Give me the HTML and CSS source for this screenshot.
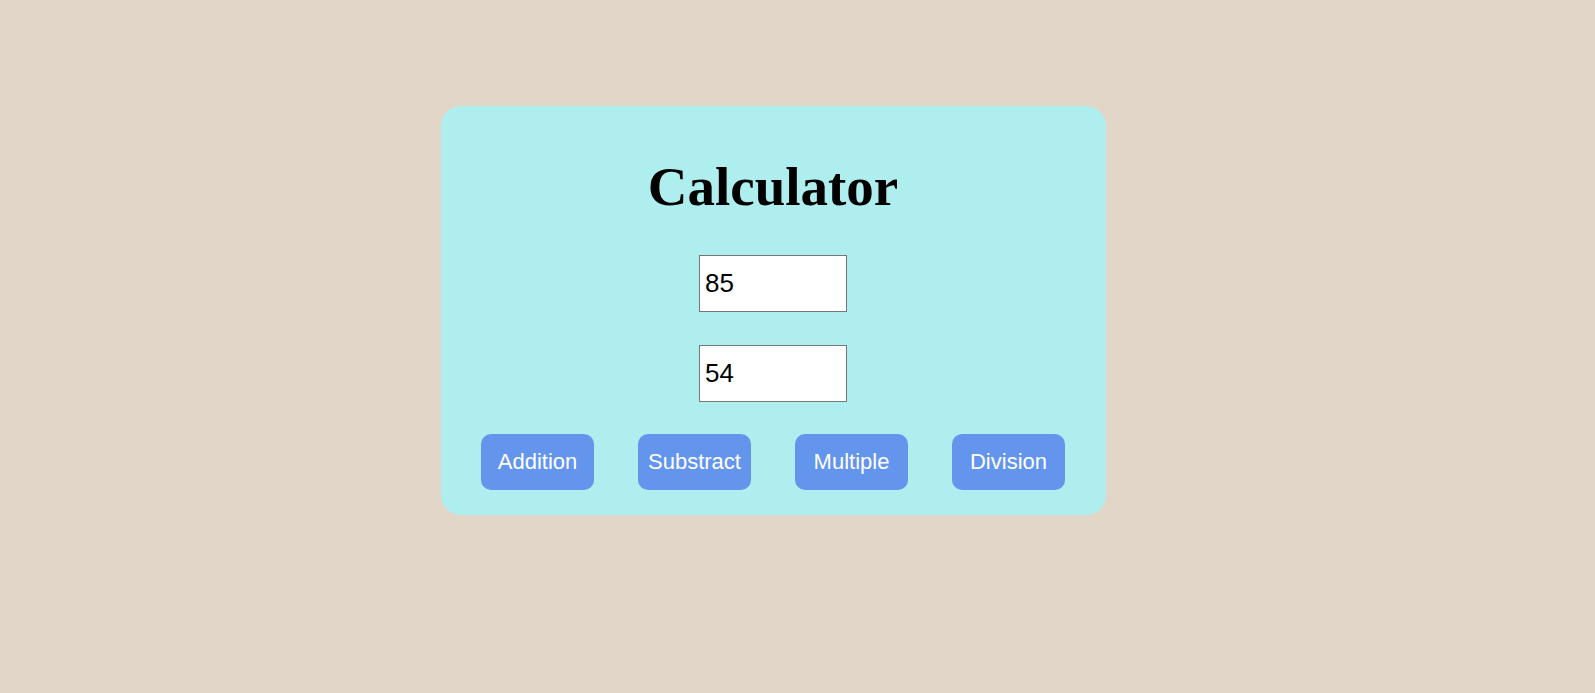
FILE: index.html
```html
<!DOCTYPE html>
<html lang="en">
<head>
<meta charset="utf-8">
<title>Calculator</title>
<link rel="stylesheet" href="styles.css">
</head>
<body>
<main class="page">
  <section class="card">
    <h1 class="title">Calculator</h1>
    <input class="num" type="text" value="85">
    <input class="num second" type="text" value="54">
    <div class="ops">
      <button class="op">Addition</button>
      <button class="op">Substract</button>
      <button class="op">Multiple</button>
      <button class="op">Division</button>
    </div>
  </section>
</main>
</body>
</html>
```

FILE: styles.css
```css
html, body {
  margin: 0;
  padding: 0;
  background: #e2d6c8;
  height: 100%;
}

.page {
  padding-top: 106px;
  padding-left: 441px;
}

.card {
  width: 665px;
  box-sizing: border-box;
  background: #afeeee;
  border-radius: 20px;
  padding: 50px 41px 25px 40px;
  display: flex;
  flex-direction: column;
  align-items: center;
}

.title {
  margin: 0 0 37px;
  font-family: "Liberation Serif", "Times New Roman", serif;
  font-weight: bold;
  font-size: 55px;
  line-height: 62px;
  color: #000;
}

.num {
  width: 148px;
  height: 57px;
  box-sizing: border-box;
  margin: 0 0 33px;
  padding: 1px 4px 1px 5px;
  border: 1px solid #767676;
  background: #fff;
  font-family: "Liberation Sans", Arial, sans-serif;
  font-size: 26px;
  color: #000;
  outline: none;
}

.num.second {
  margin-bottom: 32px;
}

.ops {
  align-self: stretch;
  display: flex;
  justify-content: space-between;
}

.op {
  width: 113px;
  height: 56px;
  padding: 0;
  border: none;
  border-radius: 10px;
  background: #6495ed;
  color: #fff;
  font-family: "Liberation Sans", Arial, sans-serif;
  font-size: 22px;
}
```
